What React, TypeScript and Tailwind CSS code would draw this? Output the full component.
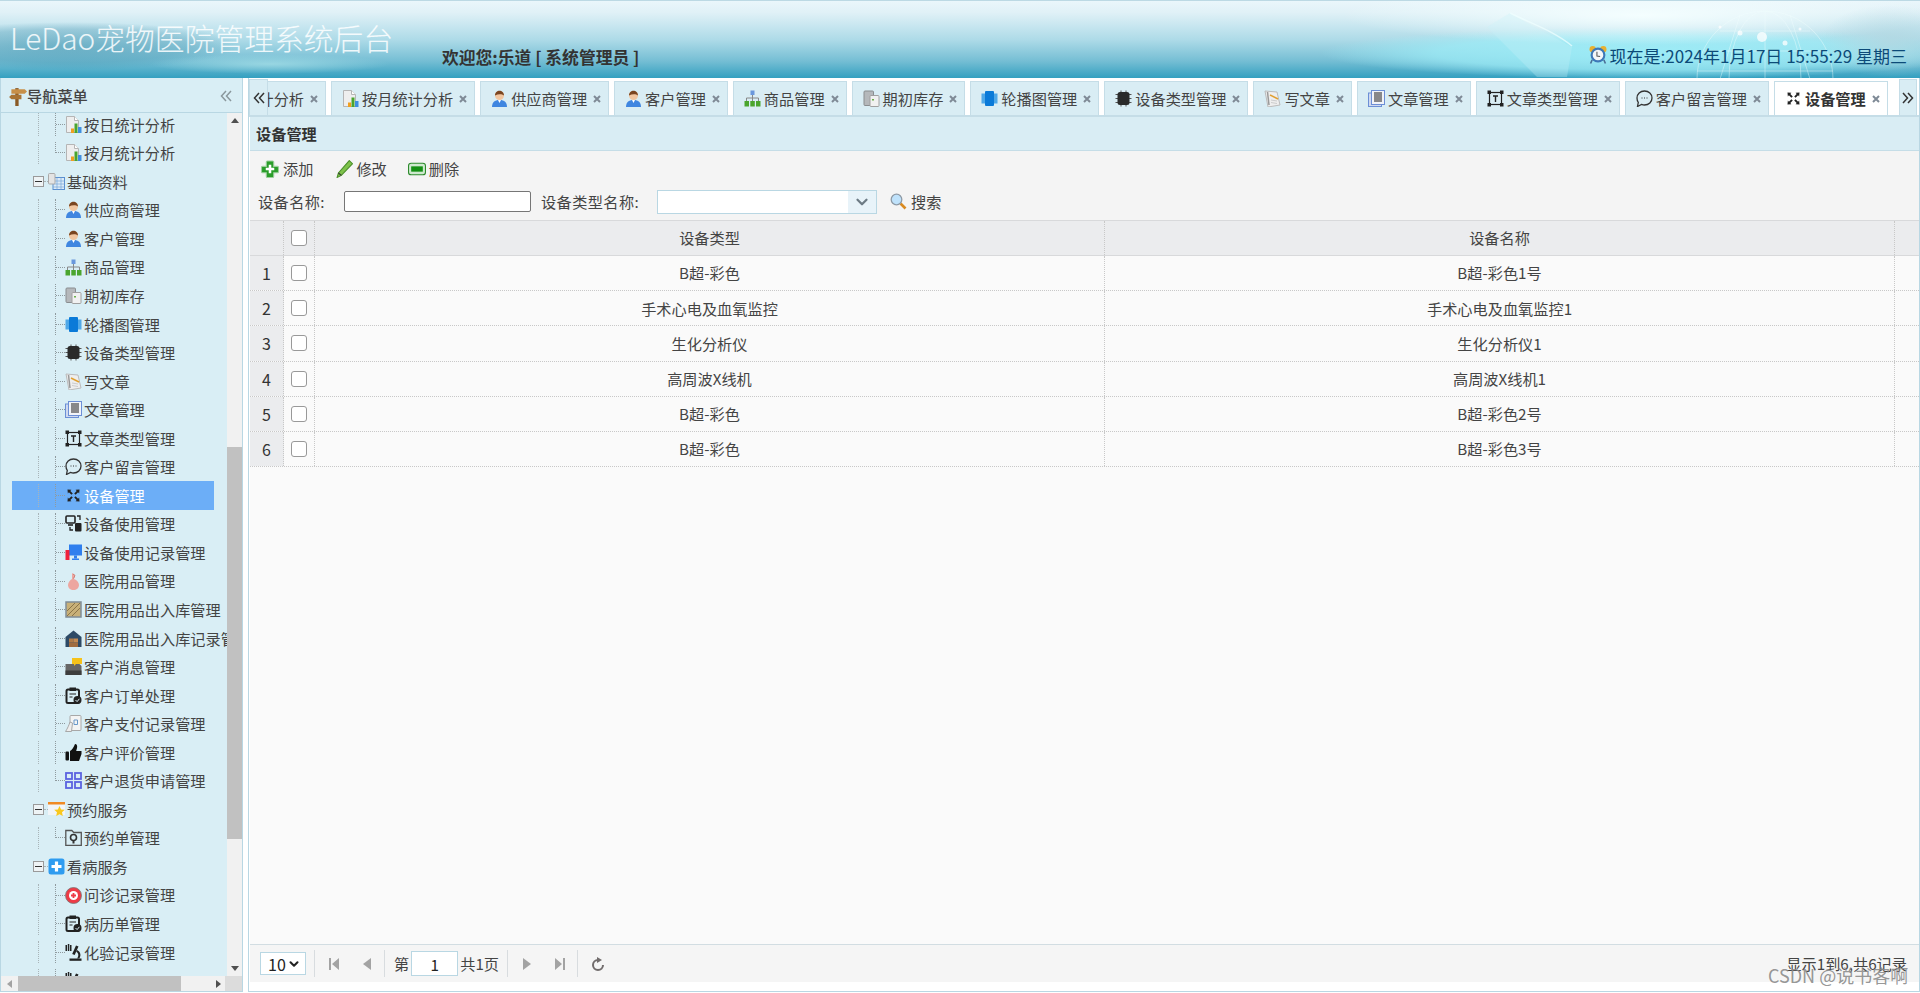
import type { ReactNode } from 'react'
import { ChevronDown } from 'lucide-react'

const icons: Record<string, ReactNode> = {
  chart: (
    <>
      <path d="M1.500 .5h8l4 4v12h-12z" fill="#eeeeee" stroke="#b5b5b5" />
      <path d="M9.500 .5v4h4" fill="#fff" stroke="#b5b5b5" />
      <rect x="6" y="12.500" width="3" height="4.500" fill="#f0a020" />
      <rect x="9.500" y="7.500" width="3" height="9.500" fill="#4aa52e" />
      <rect x="13" y="11" width="3.500" height="6" fill="#3f8fe0" />
    </>
  ),
  data: (
    <>
      <rect x="5" y="4.500" width="11.500" height="12" fill="#dcebf8" stroke="#5a8fd0" />
      <path d="M5 8h11.500M5 11h11.500M5 14h11.500M9 4.500v12M13 4.500v12" stroke="#7aa8d8" strokeWidth=".7" />
      <rect x="0.500" y="0.500" width="6.500" height="10.500" rx="1" fill="#e4e4e4" stroke="#aaa" />
    </>
  ),
  user: (
    <>
      <path d="M1 17c0-4.500 2.500-7 7.500-7s7.500 2.500 7.500 7z" fill="#3f86e0" />
      <circle cx="8.500" cy="5.500" r="4.500" fill="#f2c6a0" />
      <path d="M4 5.500c0-6.500 9-6.500 9 0-2-1.800-6-1.800-9 0z" fill="#7a4520" />
      <path d="M7 10h3l-1.500 3z" fill="#fff" />
    </>
  ),
  tree: (
    <>
      <rect x="6.500" y="0.500" width="4" height="4.500" fill="#6a98dc" />
      <path d="M8.500 5v3M2.500 11V8h12v3M8.500 8v3" stroke="#888" fill="none" />
      <rect x="0.500" y="11" width="4.500" height="5.500" fill="#4aa52e" />
      <rect x="6.300" y="11" width="4.500" height="5.500" fill="#4aa52e" />
      <rect x="12" y="11" width="4.500" height="5.500" fill="#4aa52e" />
    </>
  ),
  server: (
    <>
      <rect x="1" y="1" width="9.500" height="14.500" rx="1" fill="#b5b8bb" stroke="#8a8d90" />
      <rect x="7" y="5.500" width="9" height="11" rx="1" fill="#f1f1f1" stroke="#a0a0a0" />
      <rect x="9" y="9" width="2" height="1.500" fill="#6bb04a" />
    </>
  ),
  slides: (
    <>
      <rect x="0.500" y="3.500" width="3.500" height="10" fill="#4fa8e8" />
      <rect x="13" y="3.500" width="3.500" height="10" fill="#4fa8e8" />
      <rect x="4" y="1" width="9" height="15" rx="1" fill="#0a7ad8" />
    </>
  ),
  chip: (
    <>
      <path d="M3 4.500H.5M3 8.500H.5M3 12.500H.5M14 4.500h2.500M14 8.500h2.500M14 12.500h2.500M6 3V.5M11 3V.5M6 14v2.500M11 14v2.500" stroke="#555" />
      <rect x="2.500" y="2" width="12" height="13" rx="2.500" fill="#2a2a2a" />
    </>
  ),
  write: (
    <>
      <path d="M1 1l12 1 3 13-12 2z" fill="#eee" stroke="#bbb" />
      <path d="M3.500 2l1.500 13" stroke="#999" strokeWidth="1.500" />
      <path d="M6 5l8 4" stroke="#e0a030" strokeWidth="1.500" />
      <path d="M7 10l6 1M7 12.500l6 1" stroke="#ccc" />
    </>
  ),
  article: (
    <>
      <rect x="0.500" y="3" width="13" height="13.500" fill="#cfd9ef" stroke="#6c8fd6" />
      <rect x="3.500" y="0.500" width="13" height="14" fill="#f1f3f8" stroke="#6c8fd6" />
      <path d="M6 3h8M6 5h8M6 7h8M6 9h8M6 11h8" stroke="#666" strokeWidth="1.300" />
    </>
  ),
  frame: (
    <>
      <rect x="2.500" y="2.500" width="12" height="12" fill="none" stroke="#222" strokeWidth="1.200" />
      <rect x="0.500" y="0.500" width="3.500" height="3.500" fill="#222" />
      <rect x="13" y="0.500" width="3.500" height="3.500" fill="#222" />
      <rect x="0.500" y="13" width="3.500" height="3.500" fill="#222" />
      <rect x="13" y="13" width="3.500" height="3.500" fill="#222" />
      <path d="M6 6h5M8.500 6v6" stroke="#222" strokeWidth="1.400" />
    </>
  ),
  chat: (
    <>
      <path d="M8.500 1c4.300 0 7.500 3 7.500 7s-3.200 7-7.500 7c-1 0-2-.2-3-.6L1.500 16.500l.8-4.100C1.200 11.200 1 9.600 1 8c0-4 3.200-7 7.500-7z" fill="none" stroke="#333" strokeWidth="1.300" />
      <path d="M5.500 8h1M8 8h1M10.500 8h1" stroke="#333" />
    </>
  ),
  arrows: (
    <g fill="#222">
      <path d="M8.500 0l2.500 3h-1.500v3.500h-2V3H6z" transform="rotate(-45 8.500 8.500)" />
      <path d="M8.500 0l2.500 3h-1.500v3.500h-2V3H6z" transform="rotate(45 8.500 8.500)" />
      <path d="M8.500 0l2.500 3h-1.500v3.500h-2V3H6z" transform="rotate(135 8.500 8.500)" />
      <path d="M8.500 0l2.500 3h-1.500v3.500h-2V3H6z" transform="rotate(225 8.500 8.500)" />
    </g>
  ),
  swap: (
    <>
      <rect x="1" y="1" width="9" height="7" rx="1" fill="none" stroke="#222" strokeWidth="1.600" />
      <path d="M3 10h5" stroke="#222" strokeWidth="1.600" />
      <rect x="10" y="8" width="6.500" height="8.500" rx="1" fill="#222" />
      <path d="M12 1h3v4M5 12v3h3" fill="none" stroke="#222" strokeWidth="1.300" />
    </>
  ),
  monitor: (
    <>
      <rect x="4" y="0.500" width="13" height="11" fill="#2f7fee" />
      <rect x="9" y="11.500" width="3" height="3" fill="#2f7fee" />
      <rect x="7" y="14.500" width="7" height="1.500" fill="#2f7fee" />
      <rect x="0.500" y="6" width="4" height="10" fill="#f0203a" />
    </>
  ),
  vase: (
    <>
      <path d="M7 0l3 2-1 4c3 1 5 3.500 5 6 0 3-2.500 5-5.500 5S3 15 3 12c0-2.500 2-5 4-6z" fill="#eda6a0" />
      <path d="M8 1l2 1.500-1.500 3" fill="none" stroke="#c9807a" />
    </>
  ),
  crate: (
    <>
      <rect x="1" y="1" width="15" height="15" fill="#c8b078" stroke="#7f8c96" strokeWidth="1.500" />
      <path d="M2 15L15 2M2 10l8-8M7 15l8-8" stroke="#8a7448" />
    </>
  ),
  warehouse: (
    <>
      <path d="M.5 7l8-6.500 8 6.500v10H.5z" fill="#2d4a66" />
      <rect x="4" y="8.500" width="4.500" height="4" fill="#b07a48" />
      <rect x="8.500" y="8.500" width="4.500" height="4" fill="#c48a52" />
      <rect x="4" y="12.500" width="9" height="4.500" fill="#a06c40" />
    </>
  ),
  message: (
    <>
      <path d="M.5 6h14l2 2v9H.5z" fill="#666" />
      <rect x=".5" y="12.500" width="16" height="4.500" fill="#3d3d3d" />
      <path d="M7 0h10v6h-6l-2 2V6H7z" fill="#f6c21a" />
    </>
  ),
  clipboard: (
    <>
      <rect x="1.500" y="2.500" width="12.500" height="13.500" rx="1.500" fill="none" stroke="#222" strokeWidth="2" />
      <rect x="4.500" y="0.500" width="6.500" height="3.500" fill="#222" />
      <path d="M4.500 7h6.500M4.500 10h3" stroke="#222" />
      <circle cx="12.500" cy="13" r="4" fill="#222" />
      <path d="M10.500 13l1.600 1.600 2.300-2.800" fill="none" stroke="#dbeef5" />
    </>
  ),
  pay: (
    <>
      <rect x="5" y="0.500" width="11" height="15" rx="1" fill="#f4f4f4" stroke="#a8a8a8" />
      <path d="M.5 16.500c2-3 3.500-6.500 4.500-9.500l2.500 1-1 8.500z" fill="#eee" stroke="#a8a8a8" />
      <path d="M9 5h3.500v4.500H9z" fill="none" stroke="#6a98c8" />
    </>
  ),
  thumb: (
    <>
      <path d="M5 7c2-1 3.500-3.500 5-7 2 0 2.500 2 2 4l-.8 3H16.500v3l-2.500 7H5z" fill="#111" />
      <rect x="0.500" y="7.500" width="3.500" height="9" rx="1" fill="#111" />
    </>
  ),
  grid: (
    <g fill="none" stroke="#5a62e0" strokeWidth="1.800">
      <rect x="1" y="1" width="6" height="6" />
      <rect x="10" y="1" width="6" height="6" />
      <rect x="1" y="10" width="6" height="6" />
      <rect x="10" y="10" width="6" height="6" />
    </g>
  ),
  star: (
    <>
      <rect x="0" y="1" width="17" height="13" fill="#f2f5f8" />
      <rect x="0" y="1" width="17" height="2.500" fill="#f08a24" />
      <path d="M11.500 5l1.600 3.400 3.700.4-2.800 2.500.8 3.700-3.300-1.800-3.300 1.800.8-3.700-2.800-2.500 3.700-.4z" fill="#f8c81e" />
    </>
  ),
  lock: (
    <>
      <path d="M.8 16.500V1.500h6l2 2h7.500v13z" fill="none" stroke="#555" strokeWidth="1.300" />
      <circle cx="8.500" cy="8.500" r="3" fill="none" stroke="#333" strokeWidth="1.600" />
      <path d="M7.500 11.500h2v3h-2z" fill="#333" />
    </>
  ),
  cross: (
    <>
      <rect x="0.500" y="0.500" width="16" height="16" rx="2.500" fill="#2f9cf0" />
      <path d="M8.500 3.500v10M3.500 8.500h10" stroke="#fff" strokeWidth="3.200" />
    </>
  ),
  redplus: (
    <>
      <circle cx="8.500" cy="8.500" r="8" fill="#ee3b46" stroke="#777" strokeWidth=".8" />
      <circle cx="8.500" cy="8.500" r="4.500" fill="#fff" />
      <path d="M8.500 6v5M6 8.500h5" stroke="#ee3b46" strokeWidth="1.800" />
    </>
  ),
  scope: (
    <g fill="#222">
      <path d="M.5 1H2v6H.5zM2.800 0h1.500v7H2.800zM5 1h1.500v6H5z" />
      <path d="M11 1.500l2.500 1-3.800 8.500-2.500-1z" />
      <path d="M12 6c3.500 1.500 4.500 5.500 2.300 8.500h-2.200c2-2.500 1.500-5.500-.9-6.700z" />
      <rect x="4.500" y="14.500" width="12" height="2.300" />
    </g>
  ),
  clock: (
    <>
      <circle cx="3.500" cy="3" r="3" fill="#e8b030" />
      <circle cx="13.500" cy="3" r="3" fill="#e8b030" />
      <path d="M3 13l-1.500 3.500M14 13l1.500 3.500" stroke="#4c6f96" strokeWidth="1.500" />
      <circle cx="8.500" cy="8.500" r="7" fill="#3d78b8" />
      <circle cx="8.500" cy="8.500" r="5" fill="#f4f6f8" />
      <path d="M7.500 5.500v4l3 .5" fill="none" stroke="#555" />
    </>
  ),
  sign: (
    <>
      <rect x="6.500" y="1" width="3" height="16" fill="#8a5a26" />
      <path d="M3 2h12l2 2-2 2H3z" fill="#c78f48" />
      <path d="M1 9l2-2h9v4H3z" fill="#a87334" />
    </>
  ),
  addGreen: (
    <>
      <path d="M6 1h5a1 1 0 0 1 1 1v4h3.500a1 1 0 0 1 1 1v4a1 1 0 0 1-1 1H12v3.500a1 1 0 0 1-1 1H6a1 1 0 0 1-1-1V12H1.500a1 1 0 0 1-1-1V7a1 1 0 0 1 1-1H5V2a1 1 0 0 1 1-1z" fill="#2a9d2a" stroke="#9ccf9c" strokeWidth="1" />
      <path d="M8.500 4.500v8M4.500 8.500h8" stroke="#fff" strokeWidth="2.400" />
    </>
  ),
  pencil: (
    <>
      <path d="M13.500 .5l3 3L6 14.500l-4 2 1.200-4.200z" fill="#7ec24a" stroke="#4b8f2a" />
      <path d="M3.200 12.300l2.800 2.200" stroke="#333" />
    </>
  ),
  removeGreen: (
    <>
      <rect x="0.500" y="3" width="16" height="11" rx="2.500" fill="#cfe9cf" stroke="#2c8a2c" />
      <rect x="3" y="6" width="11" height="5" fill="#149014" />
    </>
  ),
  search: (
    <>
      <path d="M10.500 10.500l5 5" stroke="#d98a20" strokeWidth="2.600" />
      <circle cx="6.500" cy="6.500" r="5.300" fill="#bfe2fb" stroke="#8e9aa6" strokeWidth="1.300" />
    </>
  ),
}

function Icon({ name, size = 17 }: { name: string; size?: number }) {
  return (
    <svg viewBox="0 0 17 17" width={size} height={size} className="shrink-0">
      {icons[name]}
    </svg>
  )
}

type TreeRow = { label: string; icon: string; folder?: boolean; last?: boolean; active?: boolean }

const treeRows: TreeRow[] = [
  { label: '按日统计分析', icon: 'chart' },
  { label: '按月统计分析', icon: 'chart', last: true },
  { label: '基础资料', icon: 'data', folder: true },
  { label: '供应商管理', icon: 'user' },
  { label: '客户管理', icon: 'user' },
  { label: '商品管理', icon: 'tree' },
  { label: '期初库存', icon: 'server' },
  { label: '轮播图管理', icon: 'slides' },
  { label: '设备类型管理', icon: 'chip' },
  { label: '写文章', icon: 'write' },
  { label: '文章管理', icon: 'article' },
  { label: '文章类型管理', icon: 'frame' },
  { label: '客户留言管理', icon: 'chat' },
  { label: '设备管理', icon: 'arrows', active: true },
  { label: '设备使用管理', icon: 'swap' },
  { label: '设备使用记录管理', icon: 'monitor' },
  { label: '医院用品管理', icon: 'vase' },
  { label: '医院用品出入库管理', icon: 'crate' },
  { label: '医院用品出入库记录管理', icon: 'warehouse' },
  { label: '客户消息管理', icon: 'message' },
  { label: '客户订单处理', icon: 'clipboard' },
  { label: '客户支付记录管理', icon: 'pay' },
  { label: '客户评价管理', icon: 'thumb' },
  { label: '客户退货申请管理', icon: 'grid', last: true },
  { label: '预约服务', icon: 'star', folder: true },
  { label: '预约单管理', icon: 'lock', last: true },
  { label: '看病服务', icon: 'cross', folder: true },
  { label: '问诊记录管理', icon: 'redplus' },
  { label: '病历单管理', icon: 'clipboard' },
  { label: '化验记录管理', icon: 'scope' },
  { label: '', icon: 'scope' },
]

const tabs = [
  { label: '按月统计分析', icon: 'chart' },
  { label: '供应商管理', icon: 'user' },
  { label: '客户管理', icon: 'user' },
  { label: '商品管理', icon: 'tree' },
  { label: '期初库存', icon: 'server' },
  { label: '轮播图管理', icon: 'slides' },
  { label: '设备类型管理', icon: 'chip' },
  { label: '写文章', icon: 'write' },
  { label: '文章管理', icon: 'article' },
  { label: '文章类型管理', icon: 'frame' },
  { label: '客户留言管理', icon: 'chat' },
]

const devices = [
  ['B超-彩色', 'B超-彩色1号'],
  ['手术心电及血氧监控', '手术心电及血氧监控1'],
  ['生化分析仪', '生化分析仪1'],
  ['高周波X线机', '高周波X线机1'],
  ['B超-彩色', 'B超-彩色2号'],
  ['B超-彩色', 'B超-彩色3号'],
]

function Guide() {
  return <div className="my-[3px] w-0 border-l border-dotted border-[#a9b4b8]" />
}

function DoubleChevron({ right, className }: { right?: boolean; className: string }) {
  return (
    <svg viewBox="0 0 12 12" width={12} height={12} className={className}>
      <path
        d={right ? 'M1 1l4.500 5L1 11M6 1l4.500 5L6 11' : 'M11 1L6.500 6l4.500 5M6 1L1.500 6 6 11'}
        fill="none"
        stroke="currentColor"
        strokeWidth="1.500"
      />
    </svg>
  )
}

function SidebarRow({ row }: { row: TreeRow }) {
  if (row.folder) {
    return (
      <div className="flex h-[28.55px] w-[202px] shrink-0 items-center">
        <div className="w-[21px]" />
        <div className="flex h-[11px] w-[11px] items-center justify-center border border-[#9a9a9a] bg-[#eef3f5]">
          <div className="h-px w-[7px] bg-[#333]" />
        </div>
        <div className="w-[4px] border-t border-dotted border-[#a9b4b8]" />
        <Icon name={row.icon} />
        <span className="ml-[2px] whitespace-nowrap">{row.label}</span>
      </div>
    )
  }
  return (
    <div
      className={`flex h-[28.55px] w-[202px] shrink-0 items-stretch ${row.active ? 'bg-[#6caef7] text-white' : ''}`}
    >
      <div className="w-[26px] shrink-0" />
      <Guide />
      <div className="w-[16px] shrink-0" />
      {row.last ? (
        <div className="mb-[14px] mt-[3px] w-[10px] shrink-0 border-b border-l border-dotted border-[#8f9a9e]" />
      ) : (
        <div className="my-[3px] flex w-[10px] shrink-0 items-center border-l border-dotted border-[#8f9a9e]">
          <div className="w-full border-t border-dotted border-[#8f9a9e]" />
        </div>
      )}
      <div className="flex items-center">
        <Icon name={row.icon} />
        <span className="ml-[2px] whitespace-nowrap">{row.label}</span>
      </div>
    </div>
  )
}

function Sidebar() {
  return (
    <aside className="flex h-[914px] w-[243px] shrink-0 flex-col border border-t-0 border-[#b9d7e3] bg-[#d9eef5] text-[15.2px] leading-none text-[#444]">
      <div className="flex h-[35px] shrink-0 items-center border-b border-[#b9d7e3] pl-[7px] pr-[10px] pt-[2px]">
        <Icon name="sign" size={19} />
        <span className="font-medium">导航菜单</span>
        <DoubleChevron className="ml-auto text-[#8a979c]" />
      </div>
      <div className="flex min-h-0 flex-1">
        <div className="min-w-0 flex-1 overflow-hidden pl-[11px]">
          <div className="-mt-[3px] flex flex-col">
            {treeRows.map((row, i) => (
              <SidebarRow key={i} row={row} />
            ))}
          </div>
        </div>
        <div className="flex w-[15px] shrink-0 flex-col bg-[#f1f1f1]">
          <div className="flex h-[15px] items-center justify-center">
            <div className="h-0 w-0 border-x-[4px] border-b-[5px] border-x-transparent border-b-[#505050]" />
          </div>
          <div className="mt-[319px] h-[392px] bg-[#c1c1c1]" />
          <div className="mt-auto flex h-[15px] items-center justify-center">
            <div className="h-0 w-0 border-x-[4px] border-t-[5px] border-x-transparent border-t-[#505050]" />
          </div>
        </div>
      </div>
      <div className="flex h-[15px] shrink-0 items-center bg-[#f1f1f1]">
        <div className="flex w-[17px] justify-center">
          <div className="h-0 w-0 border-y-[4px] border-r-[5px] border-y-transparent border-r-[#a3a3a3]" />
        </div>
        <div className="h-full w-[167px] bg-[#c1c1c1]" />
        <div className="ml-[30px] flex w-[15px] justify-center">
          <div className="h-0 w-0 border-y-[4px] border-l-[5px] border-y-transparent border-l-[#505050]" />
        </div>
        <div className="ml-auto h-full w-[17px] bg-[#dcdcdc]" />
      </div>
    </aside>
  )
}

function Close() {
  return (
    <svg viewBox="0 0 8 8" width={8} height={8} className="shrink-0">
      <path d="M1 1l6 6M7 1L1 7" stroke="#7f8a96" strokeWidth="2" />
    </svg>
  )
}

function Tab({ label, icon, active }: { label: string; icon: string; active?: boolean }) {
  return (
    <div
      className={`flex shrink-0 items-center border border-b-0 border-[#c5dde7] pl-[10px] pr-[7px] ${
        active ? 'h-[36px] bg-white pb-[2px] font-semibold text-[#333]' : 'h-[34px] bg-[#d9edf4] text-[#444]'
      }`}
    >
      <Icon name={icon} />
      <span className="ml-[3px] mr-[6px] whitespace-nowrap">{label}</span>
      <Close />
    </div>
  )
}

function TabBar() {
  return (
    <div className="flex h-[39px] shrink-0 border-b-2 border-[#c5dde7] text-[15.2px] leading-none">
      <div className="mt-px flex h-[36px] w-[19px] shrink-0 items-center justify-center border border-b-0 border-[#c5dde7] bg-[#d9edf4] text-[#333]">
        <DoubleChevron className="" />
      </div>
      <div className="flex min-w-0 flex-1 gap-[5px] overflow-hidden pt-[3px]">
        <div className="flex h-[34px] w-[58px] shrink-0 items-center justify-end overflow-hidden border border-b-0 border-l-0 border-[#c5dde7] bg-[#d9edf4] pr-[7px] text-[#444]">
          <span className="mr-[6px] whitespace-nowrap">统计分析</span>
          <Close />
        </div>
        {tabs.map((t) => (
          <Tab key={t.label} label={t.label} icon={t.icon} />
        ))}
        <Tab label="设备管理" icon="arrows" active />
      </div>
      <div className="ml-[11px] mr-[2px] mt-px flex h-[36px] w-[18px] shrink-0 items-center justify-center border border-b-0 border-[#c5dde7] bg-[#d9edf4] text-[#333]">
        <DoubleChevron right className="" />
      </div>
    </div>
  )
}

function Toolbar() {
  return (
    <div className="h-[69px] shrink-0 bg-[#f4f4f4] text-[15.2px] leading-none text-[#444]">
      <div className="flex h-[36px] items-center pl-[11px]">
        <Icon name="addGreen" size={18} />
        <span className="ml-[4px]">添加</span>
        <span className="ml-[22px] flex items-center">
          <Icon name="pencil" size={18} />
          <span className="ml-[3px]">修改</span>
        </span>
        <span className="ml-[21px] flex items-center">
          <Icon name="removeGreen" size={18} />
          <span className="ml-[3px]">删除</span>
        </span>
      </div>
      <div className="flex h-[29px] items-center pl-[8px]">
        <span className="w-[86px] whitespace-nowrap tracking-[0.4px]">设备名称:</span>
        <input
          readOnly
          className="h-[21px] w-[187px] rounded-[2px] border border-[#767676] bg-white"
        />
        <span className="ml-[10px] w-[116px] whitespace-nowrap tracking-[0.4px]">设备类型名称:</span>
        <div className="flex h-[24px] w-[220px] border border-[#b9d7e3] bg-white">
          <div className="flex-1" />
          <div className="flex w-[28px] items-center justify-center bg-[#e8f3f9]">
            <ChevronDown size={18} strokeWidth={3} className="text-[#6d7b85]" />
          </div>
        </div>
        <span className="ml-[13px] flex items-center">
          <Icon name="search" />
          <span className="ml-[4px]">搜索</span>
        </span>
      </div>
    </div>
  )
}

function Checkbox() {
  return <div className="h-[16px] w-[16px] rounded-[3px] border-[1.5px] border-[#999] bg-white" />
}

function DeviceGrid() {
  return (
    <div className="flex min-h-0 flex-1 flex-col bg-[#fafafa] text-[15.2px] leading-none text-[#444]">
      <div className="flex h-[36px] shrink-0 border-y border-[#d8d9db] bg-[#ebecee] pr-[3px]">
        <div className="w-[34px] border-r border-dotted border-[#c8c8c8]" />
        <div className="flex w-[31px] items-center justify-center border-r border-dotted border-[#c8c8c8]">
          <Checkbox />
        </div>
        <div className="flex w-[790px] items-center justify-center border-r border-dotted border-[#c8c8c8]">
          设备类型
        </div>
        <div className="flex w-[790px] items-center justify-center border-r border-dotted border-[#c8c8c8]">
          设备名称
        </div>
        <div className="flex-1" />
      </div>
      {devices.map((d, i) => (
        <div key={i} className="flex h-[35.2px] shrink-0 border-b border-dotted border-[#c8c8c8]">
          <div className="flex w-[34px] items-center justify-center border-r border-dotted border-[#c8c8c8] bg-[#ebecee] text-[16px] text-[#333]">
            {i + 1}
          </div>
          <div className="flex w-[31px] items-center justify-center border-r border-dotted border-[#c8c8c8]">
            <Checkbox />
          </div>
          <div className="flex w-[790px] items-center justify-center border-r border-dotted border-[#c8c8c8]">
            {d[0]}
          </div>
          <div className="flex w-[790px] items-center justify-center border-r border-dotted border-[#c8c8c8]">
            {d[1]}
          </div>
        </div>
      ))}
    </div>
  )
}

function Sep() {
  return <div className="h-[27px] w-px bg-[#d8dcdf]" />
}

function Pager() {
  return (
    <div className="flex h-[38px] shrink-0 items-center border-t border-[#d2dde2] bg-[#f5f5f5] pl-[10px] pr-[12px] text-[15.2px] leading-none text-[#444]">
      <div className="flex h-[23px] w-[46px] items-center justify-between border border-[#b9d7e3] bg-white pl-[7px] pr-[4px] text-[16px] text-[#222]">
        10
        <ChevronDown size={14} strokeWidth={3.500} className="text-[#222]" />
      </div>
      <div className="ml-[8px]">
        <Sep />
      </div>
      <svg viewBox="0 0 10 12" width={10} height={12} className="ml-[14px]">
        <path d="M0 0h2v12H0zM10 0v12L3 6z" fill="#a3a3a3" />
      </svg>
      <svg viewBox="0 0 8 12" width={8} height={12} className="ml-[24px]">
        <path d="M8 0v12L0 6z" fill="#a3a3a3" />
      </svg>
      <div className="ml-[13px]">
        <Sep />
      </div>
      <span className="ml-[9px]">第</span>
      <input
        readOnly
        value="1"
        className="ml-[2px] h-[25px] w-[47px] border border-[#b9d7e3] bg-white text-center text-[15.2px] text-[#222]"
      />
      <span className="ml-[2px]">共1页</span>
      <div className="ml-[8px]">
        <Sep />
      </div>
      <svg viewBox="0 0 8 12" width={8} height={12} className="ml-[15px]">
        <path d="M0 0v12l8-6z" fill="#a3a3a3" />
      </svg>
      <svg viewBox="0 0 10 12" width={10} height={12} className="ml-[24px]">
        <path d="M8 0h2v12H8zM0 0v12l7-6z" fill="#a3a3a3" />
      </svg>
      <div className="ml-[12px]">
        <Sep />
      </div>
      <svg viewBox="0 0 14 14" width={14} height={14} className="ml-[13px]">
        <path d="M7 3a5 5 0 1 0 5 5" fill="none" stroke="#716c6c" strokeWidth="2" />
        <path d="M6 0l5 3-5 3z" fill="#716c6c" />
      </svg>
      <span className="ml-auto">显示1到6,共6记录</span>
    </div>
  )
}

function HeaderArt() {
  return (
    <svg className="absolute inset-0" width="1920" height="78" viewBox="0 0 1920 78">
      <defs>
        <radialGradient id="glowLow">
          <stop offset="0" stopColor="#9eeef8" stopOpacity=".95" />
          <stop offset=".65" stopColor="#9eeef8" stopOpacity=".7" />
          <stop offset="1" stopColor="#9eeef8" stopOpacity="0" />
        </radialGradient>
        <radialGradient id="glowTop">
          <stop offset="0" stopColor="#f4feff" stopOpacity="1" />
          <stop offset="1" stopColor="#f4feff" stopOpacity="0" />
        </radialGradient>
        <radialGradient id="bandL">
          <stop offset="0" stopColor="#3f8fab" stopOpacity=".5" />
          <stop offset=".7" stopColor="#3f8fab" stopOpacity=".3" />
          <stop offset="1" stopColor="#3f8fab" stopOpacity="0" />
        </radialGradient>
        <radialGradient id="streak">
          <stop offset="0" stopColor="#a8e0e8" stopOpacity=".75" />
          <stop offset="1" stopColor="#a8e0e8" stopOpacity="0" />
        </radialGradient>
        <radialGradient id="cornerR">
          <stop offset="0" stopColor="#b3d8e2" stopOpacity=".8" />
          <stop offset="1" stopColor="#b3d8e2" stopOpacity="0" />
        </radialGradient>
      </defs>
      <ellipse cx="70" cy="45" rx="170" ry="24" fill="url(#bandL)" />
      <ellipse cx="270" cy="63" rx="120" ry="10" fill="url(#streak)" />
      <ellipse cx="1650" cy="52" rx="330" ry="26" fill="url(#glowLow)" />
      <ellipse cx="1640" cy="14" rx="300" ry="30" fill="url(#glowTop)" />
      <ellipse cx="1890" cy="40" rx="70" ry="36" fill="url(#cornerR)" />
      <path d="M1510 12l32 18 30 16 -5 30h-30l-50-50z" fill="#c9f3f8" opacity=".3" />
      <path d="M1510 12c20 10 44 18 62 33" fill="none" stroke="#f0ffff" strokeWidth="1.500" opacity=".7" />
      <g fill="none" stroke="#f2ffff" strokeWidth=".7" opacity=".6">
        <circle cx="1765" cy="78" r="68" />
        <ellipse cx="1765" cy="78" rx="36" ry="68" />
        <path d="M1697 70h136M1704 50h122M1720 30h90M1765 10v68M1740 14l-20 64M1790 14l20 64" />
      </g>
      <g fill="#ffffff" opacity=".75">
        <circle cx="1762" cy="36" r="5" />
        <circle cx="1740" cy="32" r="2.500" />
        <circle cx="1785" cy="42" r="2.500" />
        <circle cx="1720" cy="26" r="1.500" />
        <circle cx="1800" cy="28" r="1.500" />
        <circle cx="1750" cy="50" r="1.500" />
      </g>
    </svg>
  )
}

export default function App() {
  return (
    <div className="flex h-[993px] w-[1920px] flex-col overflow-hidden bg-white font-['Noto_Sans_CJK_SC','Noto_Sans',sans-serif]">
      <header className="relative flex h-[78px] shrink-0 border-t border-[#bcd9e4] bg-[linear-gradient(180deg,#eaf6fb_0%,#e0f1f7_15%,#aedbe8_50%,#75bed4_78%,#34a0c0_100%)]">
        <HeaderArt />
        <h1 className="relative w-[442px] shrink-0 pl-[10px] pt-[16px] text-[29.800px] font-light leading-[40px] text-white/85">
          LeDao宠物医院管理系统后台
        </h1>
        <div className="relative whitespace-pre pt-[46px] text-[16.800px] font-bold leading-[20px] text-[#333]">
          欢迎您:乐道 [ 系统管理员 ]
        </div>
        <div className="relative ml-auto flex items-start pr-[13px] pt-[45px] text-[17px] leading-[20px] text-[#0c4a78]">
          <Icon name="clock" size={18} />
          <span className="ml-[3px] whitespace-pre">现在是:2024年1月17日 15:55:29 星期三</span>
        </div>
      </header>
      <div className="flex min-h-0 flex-1">
        <Sidebar />
        <main className="ml-[5px] flex h-[914px] min-w-0 flex-1 flex-col border-x border-b border-[#b9d7e3] pb-[9px]">
          <TabBar />
          <div className="ml-px flex h-[34px] shrink-0 items-center border-b border-[#c5dde7] bg-[#d9edf4] pl-[6px] text-[15.200px] font-semibold leading-none text-[#333]">
            设备管理
          </div>
          <div className="ml-px flex min-h-0 flex-1 flex-col">
            <Toolbar />
            <DeviceGrid />
            <Pager />
          </div>
        </main>
      </div>
      <div className="absolute left-[1768px] top-[964px] text-[18px] leading-[22px] text-[#8a8a8a]/90">
        CSDN @说书客啊
      </div>
    </div>
  )
}
